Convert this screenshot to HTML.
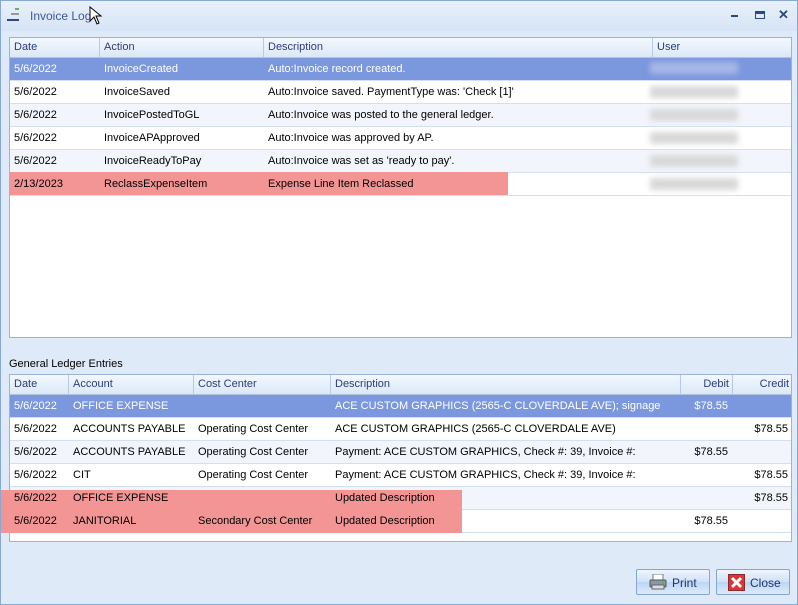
<!DOCTYPE html>
<html><head><meta charset="utf-8"><style>
*{margin:0;padding:0;box-sizing:border-box}
body{width:798px;height:605px;overflow:hidden;background:#dfeaf8;font-family:"Liberation Sans",sans-serif;font-size:11px;color:#000;position:relative}
.win{position:absolute;left:0;top:0;width:798px;height:605px;border:1px solid #8aa8d4;background:#dfeaf8}
.title{position:absolute;left:0;top:0;width:796px;height:30px;background:linear-gradient(#e9f1fb,#d6e4f6);}
.title span{position:absolute;left:29px;top:8px;font-size:12px;color:#3c5a9a}
.grid{position:absolute;background:#fff;border:1px solid #9bb3d6;overflow:hidden}
.hdr{position:absolute;top:0;height:20px;background:linear-gradient(#f3f8fe,#dce8f7);border-right:1px solid #b7c9e3;border-bottom:1px solid #b0c4e0;color:#2a3d7a;padding:3px 0 0 4px;white-space:nowrap}
.row{position:absolute;left:0;right:0;height:23px;border-bottom:1px solid #d4e0f0}
.c{position:absolute;top:5px;white-space:nowrap;z-index:3}
.sel{background:#7b97de;color:#fff}
.alt{background:#f2f6fc}
.red{position:absolute;background:#f49595;z-index:1}
.btn{position:absolute;top:568px;height:26px;border:1px solid #86a6d2;border-radius:2px;background:linear-gradient(#eef5fd,#cfe2f7 50%,#bcd6f3 51%,#dcebfb);color:#1d3470;font-size:12px}
.blur{position:absolute;height:12px;background:#d8d8d8;filter:blur(3px);z-index:2}
</style></head><body><div class="win">
<div class="title">
<svg style="position:absolute;left:6px;top:7px" width="14" height="16"><rect x="8" y="0" width="4" height="2" fill="#6ab04c"/><rect x="4" y="5" width="8" height="2" fill="#999"/><rect x="0" y="11" width="12" height="2" fill="#2a4a80"/></svg>
<span>Invoice Log</span>
<svg style="position:absolute;left:88px;top:5px" width="16" height="20"><path d="M1 1 L1 15 L5 11 L8 18 L10 17 L7 10 L12 10 Z" fill="#fff" stroke="#000"/></svg>
<div style="position:absolute;left:730px;top:14px;width:7px;height:2px;background:#2a4a80"></div>
<div style="position:absolute;left:754px;top:10px;width:10px;height:8px;border:1px solid #2a4a80;border-top-width:3px"></div>
<div style="position:absolute;left:777px;top:6px;font-size:13px;font-weight:bold;color:#2a4a80">✕</div>
</div>

<div class="grid" style="left:8px;top:36px;width:783px;height:301px">
<div class="hdr" style="left:0;width:90px">Date</div>
<div class="hdr" style="left:90px;width:164px">Action</div>
<div class="hdr" style="left:254px;width:389px">Description</div>
<div class="hdr" style="left:643px;width:140px">User</div>
<div class="row sel" style="top:20px"><span class="c" style="left:4px">5/6/2022</span><span class="c" style="left:94px">InvoiceCreated</span><span class="c" style="left:258px">Auto:Invoice record created.</span></div>
<div class="row" style="top:43px"><span class="c" style="left:4px">5/6/2022</span><span class="c" style="left:94px">InvoiceSaved</span><span class="c" style="left:258px">Auto:Invoice saved. PaymentType was: 'Check [1]'</span></div>
<div class="row alt" style="top:66px"><span class="c" style="left:4px">5/6/2022</span><span class="c" style="left:94px">InvoicePostedToGL</span><span class="c" style="left:258px">Auto:Invoice was posted to the general ledger.</span></div>
<div class="row" style="top:89px"><span class="c" style="left:4px">5/6/2022</span><span class="c" style="left:94px">InvoiceAPApproved</span><span class="c" style="left:258px">Auto:Invoice was approved by AP.</span></div>
<div class="row alt" style="top:112px"><span class="c" style="left:4px">5/6/2022</span><span class="c" style="left:94px">InvoiceReadyToPay</span><span class="c" style="left:258px">Auto:Invoice was set as 'ready to pay'.</span></div>
<div class="row" style="top:135px"><span class="c" style="left:4px">2/13/2023</span><span class="c" style="left:94px">ReclassExpenseItem</span><span class="c" style="left:258px">Expense Line Item Reclassed</span></div>
<div class="red" style="left:0;top:134px;width:498px;height:23px"></div>
<div class="blur" style="left:640px;top:24px;width:88px;background:#a7b7e6"></div>
<div class="blur" style="left:640px;top:48px;width:88px"></div>
<div class="blur" style="left:640px;top:71px;width:88px"></div>
<div class="blur" style="left:640px;top:94px;width:88px"></div>
<div class="blur" style="left:640px;top:117px;width:88px"></div>
<div class="blur" style="left:640px;top:140px;width:88px"></div>
</div>

<div style="position:absolute;left:8px;top:357px">General Ledger Entries</div>
<div class="grid" style="left:8px;top:373px;width:783px;height:168px">
<div class="hdr" style="left:0;width:59px">Date</div>
<div class="hdr" style="left:59px;width:125px">Account</div>
<div class="hdr" style="left:184px;width:137px">Cost Center</div>
<div class="hdr" style="left:321px;width:350px">Description</div>
<div class="hdr" style="left:671px;width:52px;text-align:right;padding-right:3px">Debit</div>
<div class="hdr" style="left:723px;width:60px;text-align:right;padding-right:3px">Credit</div>
<div class="row sel" style="top:20px"><span class="c" style="left:4px">5/6/2022</span><span class="c" style="left:63px">OFFICE EXPENSE</span><span class="c" style="left:325px">ACE CUSTOM GRAPHICS (2565-C CLOVERDALE AVE); signage</span><span class="c" style="right:63px">$78.55</span></div>
<div class="row" style="top:43px"><span class="c" style="left:4px">5/6/2022</span><span class="c" style="left:63px">ACCOUNTS PAYABLE</span><span class="c" style="left:188px">Operating Cost Center</span><span class="c" style="left:325px">ACE CUSTOM GRAPHICS (2565-C CLOVERDALE AVE)</span><span class="c" style="right:3px">$78.55</span></div>
<div class="row alt" style="top:66px"><span class="c" style="left:4px">5/6/2022</span><span class="c" style="left:63px">ACCOUNTS PAYABLE</span><span class="c" style="left:188px">Operating Cost Center</span><span class="c" style="left:325px">Payment: ACE CUSTOM GRAPHICS, Check #: 39, Invoice #:</span><span class="c" style="right:63px">$78.55</span></div>
<div class="row" style="top:89px"><span class="c" style="left:4px">5/6/2022</span><span class="c" style="left:63px">CIT</span><span class="c" style="left:188px">Operating Cost Center</span><span class="c" style="left:325px">Payment: ACE CUSTOM GRAPHICS, Check #: 39, Invoice #:</span><span class="c" style="right:3px">$78.55</span></div>
<div class="row alt" style="top:112px"><span class="c" style="left:4px">5/6/2022</span><span class="c" style="left:63px">OFFICE EXPENSE</span><span class="c" style="left:325px">Updated Description</span><span class="c" style="right:3px">$78.55</span></div>
<div class="row" style="top:135px"><span class="c" style="left:4px">5/6/2022</span><span class="c" style="left:63px">JANITORIAL</span><span class="c" style="left:188px">Secondary Cost Center</span><span class="c" style="left:325px">Updated Description</span><span class="c" style="right:63px">$78.55</span></div>
</div>
<div class="red" style="left:0;top:489px;width:461px;height:43px"></div>

<div class="btn" style="left:635px;width:74px">
<svg style="position:absolute;left:12px;top:4px" width="18" height="16"><rect x="4" y="0" width="10" height="6" fill="#fff" stroke="#777"/><rect x="1" y="6" width="16" height="7" rx="1" fill="#8a97a8" stroke="#555"/><rect x="3" y="11" width="12" height="4" fill="#ddd" stroke="#666"/><rect x="13" y="8" width="2" height="2" fill="#3c3"/></svg>
<span style="position:absolute;left:35px;top:6px">Print</span></div>
<div class="btn" style="left:715px;width:74px">
<svg style="position:absolute;left:11px;top:4px" width="17" height="17"><rect x="0.5" y="0.5" width="16" height="16" fill="#d33" stroke="#8a2a2a"/><path d="M4 4 L13 13 M13 4 L4 13" stroke="#fff" stroke-width="3"/></svg>
<span style="position:absolute;left:33px;top:6px">Close</span></div>
</div></body></html>
